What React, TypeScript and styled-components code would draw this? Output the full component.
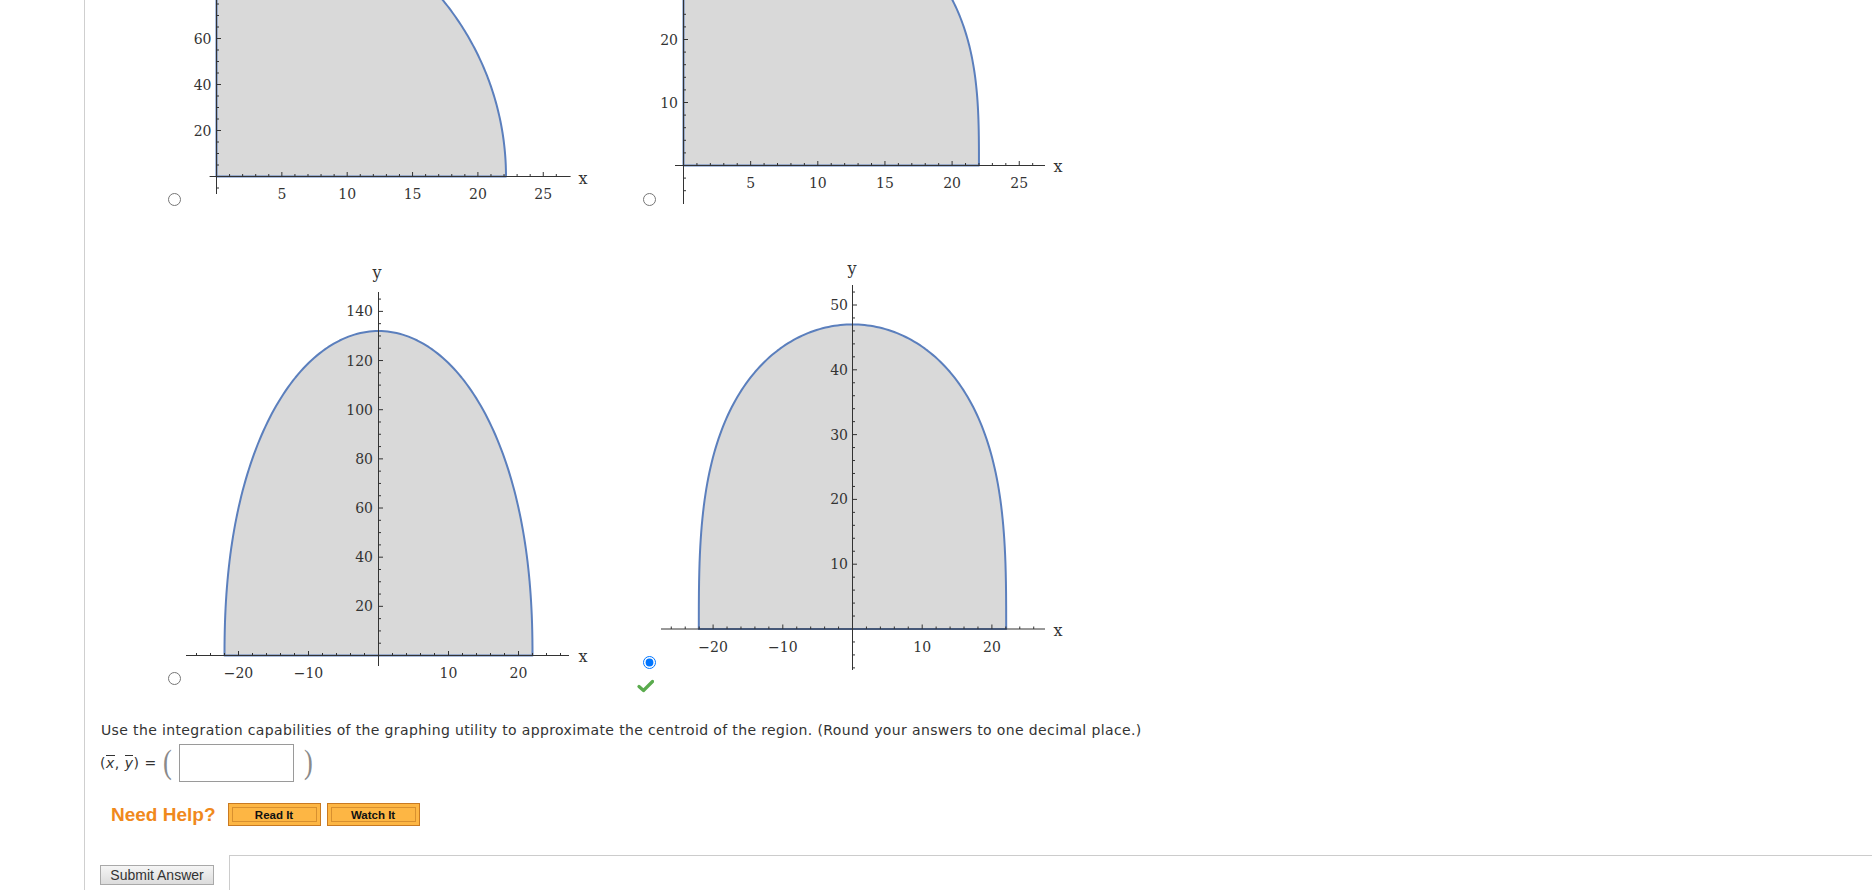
import React from 'react';
import styled, { createGlobalStyle } from 'styled-components';

const GlobalStyle = createGlobalStyle`
  html, body {
    margin: 0;
    padding: 0;
    background: #fff;
    overflow: hidden;
  }
  body {
    font-family: "DejaVu Sans", Verdana, sans-serif;
    font-size: 14px;
    color: #333;
  }
`;

const Page = styled.div`
  margin-left: 84px;
  min-height: 100vh;
  border-left: 1px solid #cfcfcf;
  padding-left: 16px;
  box-sizing: border-box;
`;

const OptionGrid = styled.div`
  display: grid;
  grid-template-columns: 475px 475px;
  row-gap: 44px;
  align-items: start;
  margin-left: 67px;
`;

const Option = styled.div`
  display: flex;
`;

const RadioCol = styled.div`
  width: 14px;
  display: flex;
  flex-direction: column;
  justify-content: flex-end;
`;

const Radio = styled.input.attrs({ type: 'radio' })`
  margin: 0;
  width: 13px;
  height: 13px;
`;

const Check = styled.svg`
  display: block;
  width: 17px;
  height: 14px;
  margin: 10px 0 2px -6px;
`;

const Plot = styled.svg`
  display: block;
  overflow: hidden;
  font-family: "DejaVu Serif", "Liberation Serif", serif;
`;

const Question = styled.p`
  margin: 27px 0 0;
  line-height: 16px;
  letter-spacing: 0.37px;
`;

const AnswerRow = styled.div`
  display: flex;
  align-items: center;
  height: 38px;
  margin-top: 6px;
  margin-left: -1px;
`;

const MathLabel = styled.span`
  width: 62px;
  letter-spacing: 0.5px;
  white-space: nowrap;
`;

const Bar = styled.span`
  display: inline-block;
  font-style: italic;
  border-top: 1px solid #333;
  line-height: 12px;
  padding-top: 1px;
`;

const BigParen = styled.span<{ $gap: number }>`
  font-family: "Liberation Serif", serif;
  font-size: 33px;
  line-height: 38px;
  color: #8a8a8a;
  transform: scaleX(0.8);
  margin: -3px ${({ $gap }) => $gap}px 0 0;
`;

const AnswerBox = styled.input`
  box-sizing: border-box;
  width: 115px;
  height: 38px;
  border: 1px solid #9a9a9a;
  margin: 0 9px 0 0;
  padding: 0;
`;

const HelpRow = styled.div`
  display: flex;
  align-items: center;
  height: 23px;
  margin-top: 21px;
`;

const NeedHelp = styled.span`
  font-family: "Liberation Sans", Arial, sans-serif;
  font-weight: bold;
  font-size: 19px;
  color: #f0891c;
  margin: 0 12px 0 10px;
`;

const HelpButton = styled.button`
  box-sizing: border-box;
  width: 93px;
  height: 23px;
  margin-right: 6px;
  padding: 0;
  border: 1px solid #c97a22;
  background: #fdb644;
  box-shadow: inset 0 0 0 3px #fdb644, inset 0 0 0 4px #d8902f;
  font-family: "Liberation Sans", Arial, sans-serif;
  font-weight: bold;
  font-size: 11.5px;
  color: #111;
`;

const SubmitRow = styled.div`
  display: flex;
  height: 35px;
  margin-top: 29px;
`;

const SubmitButton = styled.button`
  box-sizing: border-box;
  width: 114px;
  height: 20px;
  margin: 10px 0 0 -1px;
  padding: 0;
  border: 1px solid #a9a9a9;
  background: linear-gradient(#f5f5f5, #dcdcdc);
  font-family: "Liberation Sans", Arial, sans-serif;
  font-size: 14px;
  color: #333;
`;

const ResponseBox = styled.div`
  flex: 1;
  margin-left: 15px;
  border-top: 1px solid #cccccc;
  border-left: 1px solid #cccccc;
`;

type AxisSpec = {
  o: number;
  s: number;
  from: number;
  to: number;
  minor: number;
  major: number;
  labels: number[];
  at: number;
};

type GraphSpec = {
  w: number;
  h: number;
  x: AxisSpec;
  y: AxisSpec;
  curve: { h: number; r: number; p: number; half?: boolean };
  xName: [number, number];
  yName?: [number, number];
};

const graphs: GraphSpec[] = [
  {
    w: 420,
    h: 206,
    x: { o: 34.5, s: 13.07, from: 27.6, to: 388.6, minor: 1, major: 5, labels: [5, 10, 15, 20, 25], at: 194 },
    y: { o: 176.5, s: 2.3, from: 0, to: 194, minor: 5, major: 20, labels: [20, 40, 60], at: 29.5 },
    curve: { h: 123, r: 22.15, p: 0.5, half: true },
    xName: [401, 178],
  },
  {
    w: 420,
    h: 206,
    x: { o: 26.5, s: 13.43, from: 18, to: 388, minor: 1, major: 5, labels: [5, 10, 15, 20, 25], at: 183 },
    y: { o: 165.5, s: 6.3, from: 0, to: 204, minor: 2, major: 10, labels: [10, 20], at: 21 },
    curve: { h: 47, r: 22, p: 0.33, half: true },
    xName: [401, 166],
  },
  {
    w: 420,
    h: 435,
    x: { o: 196.5, s: 7.0, from: 4, to: 387, minor: 2, major: 10, labels: [-20, -10, 10, 20], at: 423 },
    y: { o: 405.5, s: 2.458, from: 42, to: 416, minor: 5, major: 20, labels: [20, 40, 60, 80, 100, 120, 140], at: 191 },
    curve: { h: 132, r: 22, p: 0.45 },
    xName: [401, 406],
    yName: [195, 22],
  },
  {
    w: 420,
    h: 445,
    x: { o: 195.5, s: 6.97, from: 4, to: 388, minor: 2, major: 10, labels: [-20, -10, 10, 20], at: 397 },
    y: { o: 379, s: 6.48, from: 35, to: 420, minor: 2, major: 10, labels: [10, 20, 30, 40, 50], at: 191 },
    curve: { h: 47, r: 22.05, p: 0.33 },
    xName: [401, 380],
    yName: [195, 18],
  },
];

const fmt = (v: number) => (v < 0 ? `\u2212${-v}` : `${v}`);

const regionPath = ({ x, y, curve }: GraphSpec) => {
  const n = 160;
  const t0 = curve.half ? 0 : -Math.PI / 2;
  const pts: string[] = [];
  for (let i = 0; i <= n; i++) {
    const t = t0 + ((Math.PI / 2 - t0) * i) / n;
    const u = curve.r * Math.sin(t);
    const v = curve.h * Math.pow(Math.max(0, Math.cos(t)), 2 * curve.p);
    pts.push(`${(x.o + u * x.s).toFixed(2)},${(y.o - v * y.s).toFixed(2)}`);
  }
  const start = curve.half ? `M${x.o},${y.o} L` : 'M';
  return `${start}${pts.join(' L')} Z`;
};

const tickValues = (a: AxisSpec, lo: number, hi: number) => {
  const out: number[] = [];
  for (let k = Math.ceil(lo / a.minor); k * a.minor <= hi; k++) {
    const v = k * a.minor;
    if (v === 0 || hi - v < 0.15 * a.minor || v - lo < 0.15 * a.minor) continue;
    out.push(v);
  }
  return out;
};

const Graph: React.FC<{ spec: GraphSpec }> = ({ spec }) => {
  const { x, y } = spec;
  const xTicks = tickValues(x, (x.from - x.o) / x.s, (x.to - x.o) / x.s);
  const yTicks = tickValues(y, (y.o - y.to) / y.s, (y.o - y.from) / y.s);
  return (
    <Plot width={spec.w} height={spec.h} viewBox={`0 0 ${spec.w} ${spec.h}`}>
      <path d={regionPath(spec)} fill="#d9d9d9" stroke="#5b7fbd" strokeWidth={2} strokeLinejoin="round" />
      <g stroke="#333" strokeWidth={1}>
        <line x1={x.from} y1={y.o} x2={x.to} y2={y.o} />
        <line x1={x.o} y1={y.from} x2={x.o} y2={y.to} />
        {xTicks.map((v) => {
          const px = x.o + v * x.s;
          const len = v % x.major === 0 ? 4.5 : 2.5;
          return <line key={`x${v}`} x1={px} y1={y.o} x2={px} y2={y.o - len} />;
        })}
        {yTicks.map((v) => {
          const py = y.o - v * y.s;
          const len = v % y.major === 0 ? 4.5 : 2.5;
          return <line key={`y${v}`} x1={x.o} y1={py} x2={x.o + len} y2={py} />;
        })}
      </g>
      <g fill="#333" fontSize={14}>
        {x.labels.map((v) => (
          <text key={`xl${v}`} x={x.o + v * x.s} y={x.at} textAnchor="middle" dominantBaseline="central">
            {fmt(v)}
          </text>
        ))}
        {y.labels.map((v) => (
          <text key={`yl${v}`} x={y.at} y={y.o - v * y.s} textAnchor="end" dominantBaseline="central">
            {fmt(v)}
          </text>
        ))}
      </g>
      <g fill="#333" fontSize={16} textAnchor="middle" dominantBaseline="central">
        <text x={spec.xName[0]} y={spec.xName[1]}>x</text>
        {spec.yName && (
          <text x={spec.yName[0]} y={spec.yName[1]}>y</text>
        )}
      </g>
    </Plot>
  );
};

const CheckMark = () => (
  <Check viewBox="0 0 17 14">
    <path d="M2 7.5 L6.5 11.5 L15.5 2.5" fill="none" stroke="#5aab4d" strokeWidth={3.2} strokeLinecap="round" strokeLinejoin="round" />
  </Check>
);

export default function App() {
  return (
    <>
      <GlobalStyle />
      <Page>
        <OptionGrid>
          {graphs.map((g, i) => (
            <Option key={i}>
              <RadioCol>
                <Radio name="region" defaultChecked={i === 3} />
                {i === 3 && <CheckMark />}
              </RadioCol>
              <Graph spec={g} />
            </Option>
          ))}
        </OptionGrid>

        <Question>
          Use the integration capabilities of the graphing utility to approximate the centroid of the region. (Round your answers to one decimal place.)
        </Question>

        <AnswerRow>
          <MathLabel>
            (<Bar>x</Bar>, <Bar>y</Bar>) =
          </MathLabel>
          <BigParen $gap={6}>(</BigParen>
          <AnswerBox type="text" />
          <BigParen $gap={0}>)</BigParen>
        </AnswerRow>

        <HelpRow>
          <NeedHelp>Need Help?</NeedHelp>
          <HelpButton>Read It</HelpButton>
          <HelpButton>Watch It</HelpButton>
        </HelpRow>

        <SubmitRow>
          <SubmitButton>Submit Answer</SubmitButton>
          <ResponseBox />
        </SubmitRow>
      </Page>
    </>
  );
}
